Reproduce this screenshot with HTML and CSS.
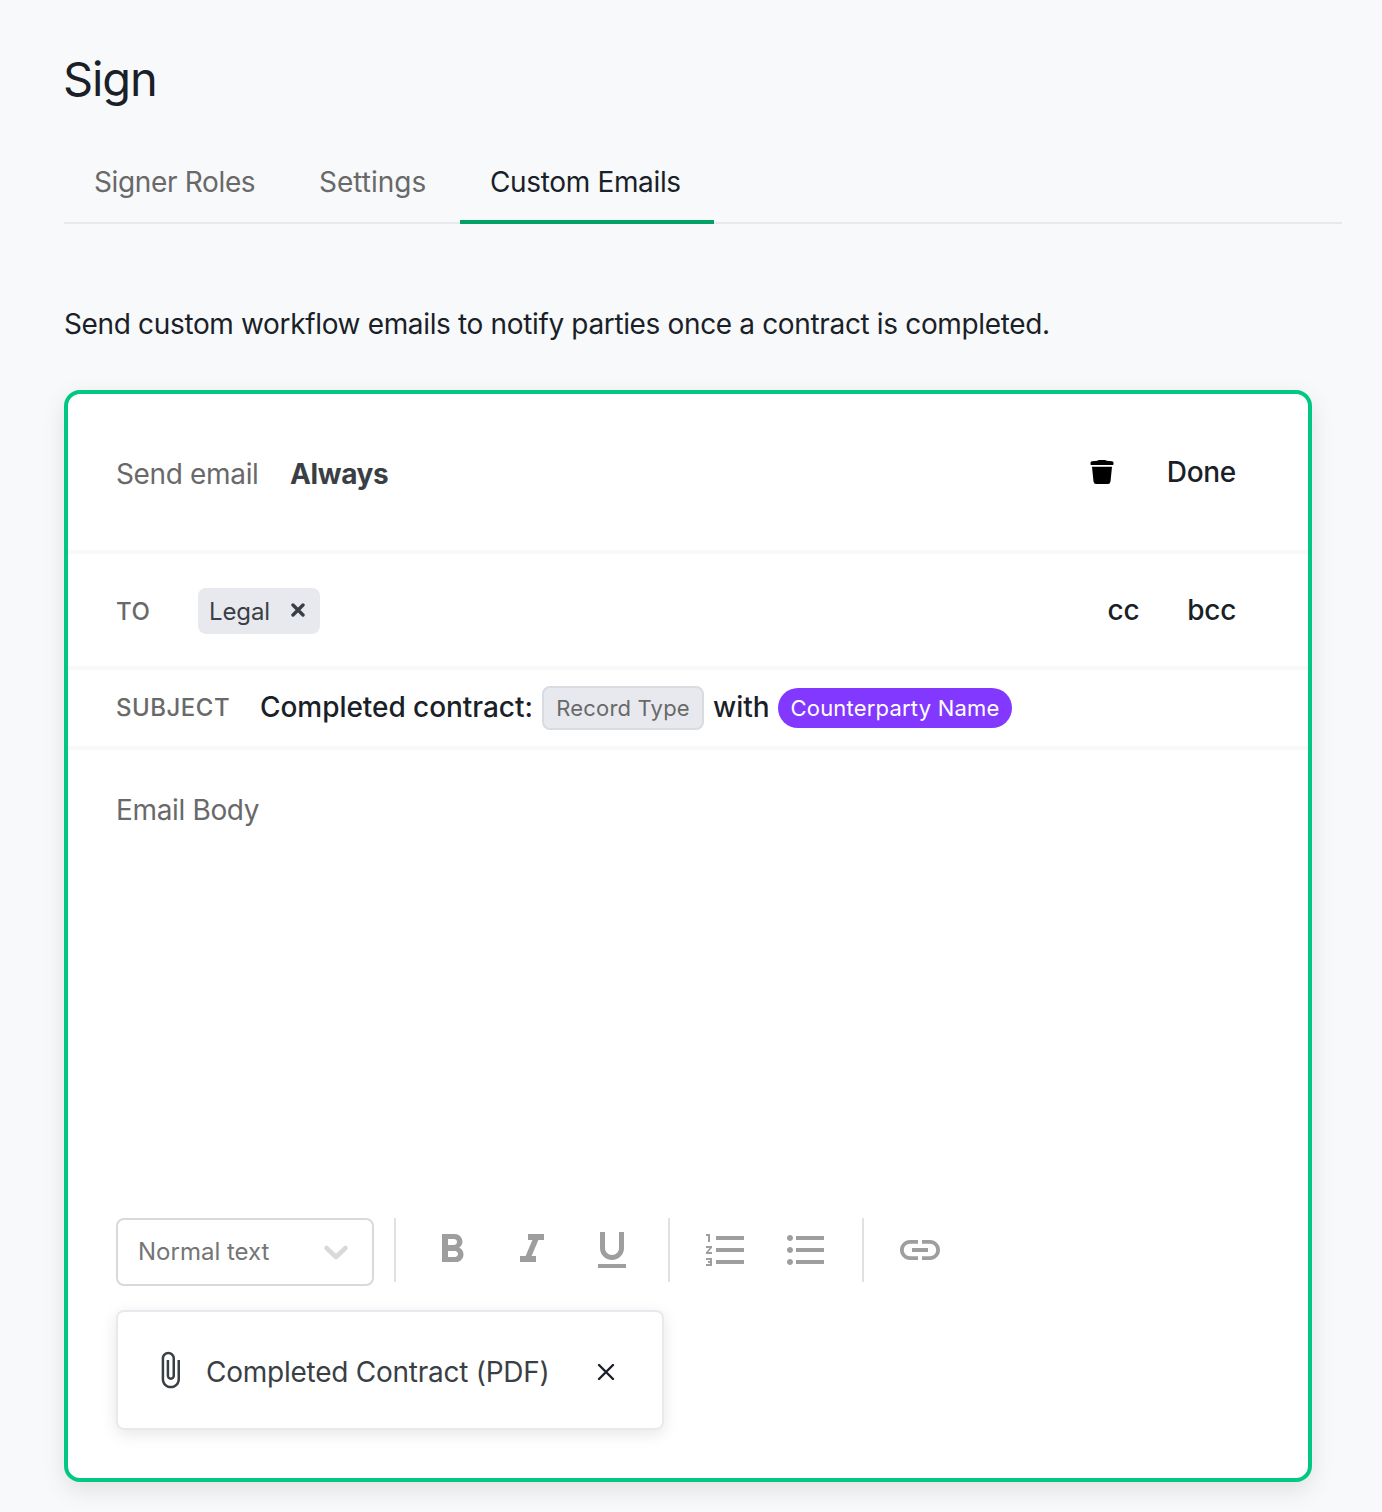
FILE: index.html
```html
<!doctype html>
<html lang="en">
<head>
<meta charset="utf-8">
<title>Sign - Custom Emails</title>
  <link rel="stylesheet" href="styles.css">
</head>
<body>
  <h1 class="title">Sign</h1>
  <nav class="tabs">
    <a class="tab tab-roles" href="#">Signer Roles</a>
    <a class="tab tab-settings" href="#">Settings</a>
    <a class="tab tab-emails active" href="#">Custom Emails</a>
  </nav>
  <p class="intro">Send custom workflow emails to notify parties once a contract is completed.</p>

  <section class="card">
    <div class="row row-send">
      <span class="send-label">Send email</span>
      <span class="send-when">Always</span>
      <div class="actions">
        <button class="btn btn-trash" aria-label="Delete">
          <svg width="24" height="24" viewBox="0 0 24 24">
            <path d="M7.5 .8Q8 0 9 0h6q1 0 1.5.8l5.5.4q1.5.2 1.5 1.5v1.6q0 .7-.7.7H1.200q-.7 0-.7-.7V2.700q0-1.300 1.500-1.500zM2 6.700h20l-1.500 14.800Q20.200 24 17.800 24H6.200Q3.800 24 3.500 21.500z"/>
          </svg>
        </button>
        <button class="btn btn-done">Done</button>
      </div>
    </div>

    <div class="row row-to">
      <span class="field-label">TO</span>
      <span class="chip">
        <span class="chip-text">Legal</span>
        <svg class="chip-close" width="14" height="14" viewBox="0 0 14 14">
          <path d="M2 2l10 10M12 2L2 12"/>
        </svg>
      </span>
      <div class="actions actions-copy">
        <button class="btn">cc</button>
        <button class="btn">bcc</button>
      </div>
    </div>

    <div class="row row-subject">
      <span class="field-label">SUBJECT</span>
      <span class="subject-text subject-first">Completed contract:</span>
      <span class="tag tag-record">Record Type</span>
      <span class="subject-text subject-with">with</span>
      <span class="tag tag-party">Counterparty Name</span>
    </div>

    <div class="body-area">Email Body</div>

    <div class="toolbar">
      <div class="select">
        <span>Normal text</span>
        <svg width="24" height="16" viewBox="0 0 24 16">
          <path d="M2.500 4L12 13l9.500-9"/>
        </svg>
      </div>
      <div class="tools tools-format">
        <svg class="icon" viewBox="0 0 24 24"><path d="M15.600 10.790c.97-.67 1.650-1.770 1.650-2.790 0-2.260-1.750-4-4-4H7v14h7.040c2.090 0 3.710-1.700 3.710-3.790 0-1.520-.86-2.820-2.150-3.420zM10 6.500h3c.83 0 1.500.67 1.500 1.500s-.67 1.500-1.500 1.500h-3v-3zm3.500 9H10v-3h3.500c.83 0 1.500.67 1.500 1.500s-.67 1.500-1.500 1.500z"/></svg>
        <svg class="icon" viewBox="0 0 24 24"><path d="M10 4v3h2.210l-3.420 8H6v3h8v-3h-2.210l3.420-8H18V4z"/></svg>
        <svg class="icon" viewBox="0 0 24 24"><path d="M12 17c3.310 0 6-2.690 6-6V3h-2.500v8c0 1.930-1.570 3.500-3.500 3.500S8.500 12.930 8.500 11V3H6v8c0 3.310 2.690 6 6 6zm-7 2v2h14v-2H5z"/></svg>
      </div>
      <div class="tools tools-list">
        <svg class="icon" viewBox="0 0 24 24"><path d="M2 17h2v.5H3v1h1v.5H2v1h3v-4H2v1zm1-9h1V4H2v1h1v3zm-1 3h1.800L2 13.100v.9h3v-1H3.200L5 10.900V10H2v1zm5-6v2h14V5H7zm0 14h14v-2H7v2zm0-6h14v-2H7v2z"/></svg>
        <svg class="icon" viewBox="0 0 24 24"><path d="M4 10.500c-.83 0-1.500.67-1.500 1.500s.67 1.500 1.500 1.500 1.500-.67 1.500-1.500-.67-1.500-1.500-1.500zm0-6c-.83 0-1.500.67-1.500 1.500S3.170 7.500 4 7.500 5.500 6.830 5.500 6 4.830 4.500 4 4.500zm0 12c-.83 0-1.500.68-1.500 1.500s.68 1.500 1.500 1.500 1.500-.68 1.500-1.500-.67-1.500-1.500-1.500zM7 19h14v-2H7v2zm0-6h14v-2H7v2zm0-8v2h14V5H7z"/></svg>
      </div>
      <div class="tools tools-link">
        <svg class="icon" viewBox="0 0 24 24"><path d="M3.900 12c0-1.710 1.390-3.100 3.100-3.100h4V7H7c-2.760 0-5 2.240-5 5s2.240 5 5 5h4v-1.900H7c-1.710 0-3.100-1.390-3.100-3.100zM8 13h8v-2H8v2zm9-6h-4v1.900h4c1.710 0 3.100 1.390 3.100 3.100s-1.390 3.100-3.100 3.100h-4V17h4c2.760 0 5-2.240 5-5s-2.240-5-5-5z"/></svg>
      </div>
    </div>

    <div class="attachment">
      <svg class="clip" width="40" height="40" viewBox="0 0 24 24"><path d="M16.500 6v11.500c0 2.210-1.790 4-4 4s-4-1.790-4-4V5c0-1.380 1.120-2.500 2.500-2.500s2.500 1.120 2.500 2.500v10.500c0 .55-.45 1-1 1s-1-.45-1-1V6H10v9.500c0 1.380 1.120 2.500 2.500 2.500s2.500-1.120 2.500-2.500V5c0-2.210-1.790-4-4-4S7 2.790 7 5v12.500c0 3.040 2.460 5.500 5.500 5.500s5.500-2.460 5.500-5.500V6h-1.500z"/></svg>
      <span class="file-name">Completed Contract (PDF)</span>
      <svg class="file-close" width="18" height="18" viewBox="0 0 18 18">
        <path d="M2 2l14 14M16 2L2 16"/>
      </svg>
    </div>
  </section>
</body>
</html>
```

FILE: styles.css
```css
* {
  box-sizing: border-box;
}
body {
  margin: 0;
  min-height: 1512px;
  padding: 48px 40px 30px 64px;
  background: #f8f9fb;
  color: #1a1f28;
  font-family: Inter, 'Liberation Sans', sans-serif;
  font-size: 28px;
  line-height: 40px;
  letter-spacing: -.35px;
  white-space: nowrap;
}
.title {
  margin: 0 0 0 -1px;
  font-size: 47px;
  font-weight: 430;
  line-height: 62px;
  letter-spacing: -1.1px;
}

/* tabs */
.tabs {
  display: flex;
  height: 82px;
  margin-top: 32px;
  border-bottom: 2px solid #e8e9ef;
}
.tab {
  height: 82px;
  padding: 20px 0 0 30px;
  color: #696969;
  text-decoration: none;
}
.tab-roles {
  width: 225px;
}
.tab-settings {
  width: 171px;
  letter-spacing: 0;
}
.tab-emails {
  width: 254px;
}
.tab.active {
  color: #1a1f28;
  border-bottom: 4px solid #04a166;
}
.intro {
  margin: 80px 0 46px;
}

/* card */
.card {
  width: 1248px;
  height: 1092px;
  background: #fff;
  border: 4px solid #00c781;
  border-radius: 16px;
  box-shadow: 0 8px 24px rgba(0, 0, 0, .1);
}
.row {
  display: flex;
  align-items: center;
  padding: 0 72px 0 48px;
  border-bottom: 4px solid #f8f9fb;
}
.row-send {
  height: 160px;
  padding-top: 4px;
}
.send-label {
  width: 174px;
  color: #696969;
}
.send-when {
  color: #3a3f45;
  font-weight: 700;
}
.actions {
  display: flex;
  align-items: center;
  gap: 53px;
  margin: -4px 0 0 auto;
}
.actions-copy {
  gap: 48px;
}
.btn {
  display: flex;
  padding: 0;
  border: 0;
  background: none;
  color: #1a1f28;
  font: inherit;
  font-weight: 500;
  letter-spacing: -.3px;
}
.row-to {
  height: 116px;
  padding-top: 2px;
}
.row-to .actions {
  margin-top: -2px;
}
.field-label {
  color: #696969;
  font-size: 24px;
  font-weight: 500;
  letter-spacing: .5px;
}
.row-to .field-label {
  width: 82px;
  padding-top: 2px;
}
.chip {
  display: flex;
  align-items: center;
  justify-content: space-between;
  width: 122px;
  height: 46px;
  padding: 0 15px 0 11px;
  background: #e8e9ef;
  border-radius: 8px;
  color: #3a3f45;
  font-size: 24px;
  letter-spacing: -.1px;
}
.chip-text {
  padding-top: 2px;
}
.chip-close {
  margin-top: -2px;
  fill: none;
  stroke: #3a3f45;
  stroke-width: 3.4;
  stroke-linecap: round;
}
.row-subject {
  height: 80px;
}
.row-subject .field-label {
  width: 144px;
}
.subject-text {
  padding-bottom: 3px;
  font-weight: 500;
  letter-spacing: -.05px;
}
.subject-first {
  width: 282px;
}
.subject-with {
  width: 65px;
}
.tag {
  display: flex;
  align-items: center;
  justify-content: center;
  font-size: 22px;
  letter-spacing: .2px;
}
.tag-record {
  width: 162px;
  height: 44px;
  margin-right: 9px;
  background: #e8e9ef;
  border: 2px solid #dadbe0;
  border-radius: 8px;
  color: #696969;
}
.tag-party {
  width: 234px;
  height: 40px;
  background: #8338ff;
  border-radius: 20px;
  color: #fff;
}
.body-area {
  height: 468px;
  padding: 40px 48px;
  color: #696969;
}

/* editor toolbar */
.toolbar {
  display: flex;
  height: 68px;
  padding-left: 48px;
}
.select {
  display: flex;
  align-items: center;
  justify-content: space-between;
  width: 258px;
  height: 68px;
  margin-right: 20px;
  padding: 0 24px 0 20px;
  border: 2px solid #d9d9d9;
  border-radius: 8px;
  color: #757575;
  font-size: 24px;
  letter-spacing: 0;
}
.select svg {
  fill: none;
  stroke: #d9d9d9;
  stroke-width: 4.5;
  stroke-linecap: round;
  stroke-linejoin: round;
}
.tools {
  display: flex;
  gap: 32px;
  height: 64px;
  padding: 8px 32px 0;
  border-left: 2px solid #e0e0e5;
}
.tools-format {
  width: 274px;
}
.tools-list {
  width: 194px;
}
.icon {
  flex: none;
  width: 48px;
  height: 48px;
  fill: #9e9e9e;
}

/* attached file */
.attachment {
  display: flex;
  align-items: center;
  width: 548px;
  height: 120px;
  margin: 24px 0 0 48px;
  padding: 4px 47px 0 32px;
  border: 2px solid #e8e9ef;
  border-radius: 8px;
  box-shadow: 0 4px 16px rgba(0, 0, 0, .1);
  color: #3a3f45;
}
.clip {
  margin: -4px 16px 0 0;
  fill: #3a3f45;
}
.file-name {
  letter-spacing: -.25px;
}
.file-close {
  margin-left: auto;
  fill: none;
  stroke: #1a1f28;
  stroke-width: 2.4;
  stroke-linecap: round;
}
```
